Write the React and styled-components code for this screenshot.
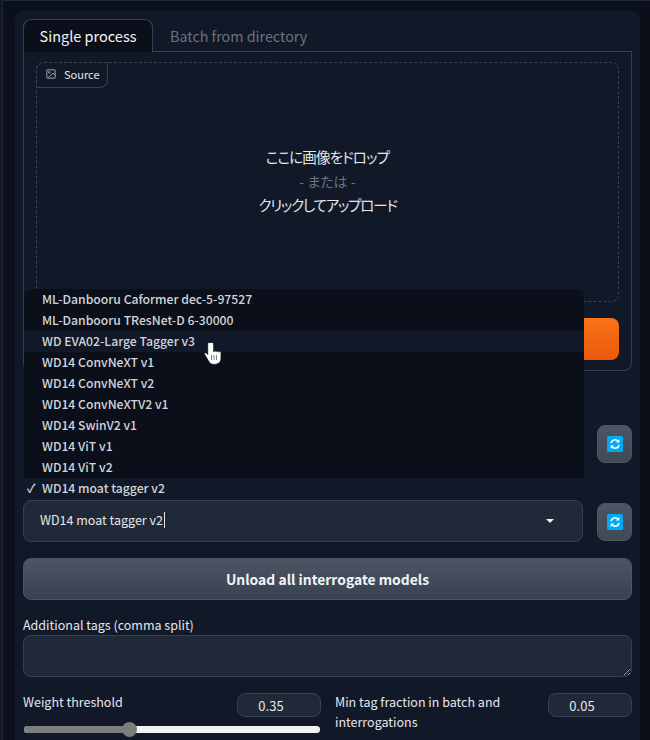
import React from "react";
import styled, { createGlobalStyle } from "styled-components";

const models = [
  "ML-Danbooru Caformer dec-5-97527",
  "ML-Danbooru TResNet-D 6-30000",
  "WD EVA02-Large Tagger v3",
  "WD14 ConvNeXT v1",
  "WD14 ConvNeXT v2",
  "WD14 ConvNeXTV2 v1",
  "WD14 SwinV2 v1",
  "WD14 ViT v1",
  "WD14 ViT v2",
  "WD14 moat tagger v2",
];

function RefreshIcon() {
  return (
    <svg width="16" height="16" viewBox="0 0 16 16">
      <rect width="16" height="16" rx="1.5" fill="#03a9f4" />
      <path d="M4 7.2A4 4 0 0 1 11 5.2M12 8.8A4 4 0 0 1 5 10.8" fill="none" stroke="#fff" strokeWidth="1.6" />
      <path d="M8.8 6.6h3.6V3zM7.2 9.4H3.6V13z" fill="#fff" />
    </svg>
  );
}

function ImageIcon() {
  return (
    <svg width="10" height="10" viewBox="0 0 24 24" fill="none" stroke="#9ca3af" strokeWidth="2.4">
      <rect x="2" y="2" width="20" height="20" rx="1" />
      <circle cx="8" cy="8" r="2" />
      <path d="M22 15l-5-5L4 22" />
    </svg>
  );
}

function HandCursor() {
  return (
    <svg width="18" height="24" viewBox="0 0 18 24">
      <path
        d="M5 1.500c-.9 0-1.300.7-1.300 1.500v10.500L2.500 12.300C1.200 11 -.4 12 .7 13.600l3.300 5.600C5.500 22 7.300 23.500 10 23.500c4.500 0 7-2.500 7-6.500v-5.500c0-1.500-2-1.600-2.300-.3-.2-1.700-2.300-1.700-2.500-.3-.2-1.700-2.400-1.600-2.500-.1V3c0-.8-.5-1.500-1.400-1.500z"
        fill="#fff"
        stroke="#0b0f19"
        strokeWidth="0.8"
      />
      <path d="M7.500 14v5M10 14v5M12.500 14v5" stroke="#6b7280" strokeWidth="0.9" />
    </svg>
  );
}

export default function App() {
  return (
    <>
      <GlobalStyle />
      <Page>
        <Panel>
          <Tabs>
            <ActiveTab>Single process</ActiveTab>
            <Tab>Batch from directory</Tab>
          </Tabs>
          <TabBody>
            <DropZone>
              <SourceBadge>
                <ImageIcon />
                Source
              </SourceBadge>
              <DropLine $spacing={-0.85}>ここに画像をドロップ</DropLine>
              <DropOr>- または -</DropOr>
              <DropLine $spacing={-1.2}>クリックしてアップロード</DropLine>
            </DropZone>
            <OrangeButton />
          </TabBody>

          <DropdownRow $top={54}>
            <Spacer />
            <IconButton>
              <RefreshIcon />
            </IconButton>
          </DropdownRow>

          <DropdownRow $top={40}>
            <SelectBox>
              <SelectValue>
                WD14 moat tagger v2<Caret />
              </SelectValue>
              <Arrow />
            </SelectBox>
            <IconButton>
              <RefreshIcon />
            </IconButton>
          </DropdownRow>

          <UnloadButton>Unload all interrogate models</UnloadButton>

          <Label>Additional tags (comma split)</Label>
          <TagsArea />

          <SliderGrid>
            <SliderBlock>
              <SliderHead>
                <SliderLabel>Weight threshold</SliderLabel>
                <NumberBox>0.35</NumberBox>
              </SliderHead>
              <Track>
                <TrackFill style={{ width: "35.5%" }} />
                <Thumb style={{ left: "35.5%" }} />
              </Track>
            </SliderBlock>
            <SliderBlock>
              <SliderHead>
                <SliderLabel>Min tag fraction in batch and interrogations</SliderLabel>
                <NumberBox>0.05</NumberBox>
              </SliderHead>
            </SliderBlock>
          </SliderGrid>

          <Menu>
            {models.map((name) => (
              <MenuItem key={name} $hover={name === "WD EVA02-Large Tagger v3"} $selected={name === "WD14 moat tagger v2"}>
                {name === "WD14 moat tagger v2" && <Check>✓</Check>}
                {name}
              </MenuItem>
            ))}
          </Menu>
          <CursorSpot>
            <HandCursor />
          </CursorSpot>
        </Panel>
      </Page>
    </>
  );
}

const GlobalStyle = createGlobalStyle`
  html, body {
    margin: 0;
    height: 740px;
    overflow: hidden;
    background: #111827;
  }
  * {
    box-sizing: border-box;
  }
`;

const Page = styled.div`
  height: 740px;
  margin-left: 2px;
  padding: 10px 0 0 12px;
  background: #0b0f19;
  border-left: 1px solid #1f2937;
  border-top: 1px solid #1f2937;
  font-family: "Noto Sans CJK JP", "Noto Sans", sans-serif;
  color: #e5e7eb;
`;

const Panel = styled.div`
  position: relative;
  width: 625px;
  height: 740px;
  padding: 8px 8px 0 8px;
  background: #111827;
  border-radius: 8px 8px 0 0;
`;

const Tabs = styled.div`
  display: flex;
  height: 33px;
  border-bottom: 1px solid #374151;
`;

const ActiveTab = styled.div`
  width: 130px;
  height: 33px;
  padding-top: 6px;
  text-align: center;
  font-size: 14.5px;
  line-height: 20px;
  color: #f3f4f6;
  background: #0b0f19;
  border: 1px solid #374151;
  border-bottom: none;
  border-radius: 8px 8px 0 0;
`;

const Tab = styled.div`
  padding: 7px 16px 0 17px;
  font-size: 14.3px;
  line-height: 20px;
  color: #6b7280;
`;

const TabBody = styled.div`
  height: 319px;
  padding: 10px 12px 0 12px;
  background: #111827;
  border: 1px solid #374151;
  border-top: none;
  border-radius: 0 0 8px 8px;
`;

const DropZone = styled.div`
  position: relative;
  height: 240px;
  padding-bottom: 2px;
  display: flex;
  flex-direction: column;
  align-items: center;
  justify-content: center;
  border: 1px dashed #374151;
  border-radius: 8px;
`;

const SourceBadge = styled.div`
  position: absolute;
  top: -1px;
  left: -1px;
  display: flex;
  align-items: center;
  gap: 8px;
  height: 26px;
  width: 72px;
  padding: 0 0 2px 9px;
  font-size: 11px;
  color: #e5e7eb;
  border: 1px solid #374151;
  border-radius: 8px 0 8px 0;
  border-top-style: dashed;
  border-left-style: dashed;
`;

const DropLine = styled.div`
  font-size: 14.5px;
  line-height: 24px;
  letter-spacing: ${(p) => p.$spacing || 0}px;
  color: #e5e7eb;
  font-feature-settings: "palt";
`;

const DropOr = styled(DropLine)`
  font-size: 14px;
  color: #6b7280;
`;

const OrangeButton = styled.div`
  height: 42px;
  margin-top: 16px;
  background: linear-gradient(to bottom, #f97316, #ea580c);
  border-radius: 8px;
`;

const DropdownRow = styled.div`
  display: flex;
  justify-content: space-between;
  margin-top: ${(p) => p.$top}px;
`;

const Spacer = styled.div`
  height: 38px;
`;

const IconButton = styled.div`
  width: 35px;
  height: 38px;
  display: flex;
  align-items: center;
  justify-content: center;
  background: linear-gradient(to bottom, #4b5563, #404956);
  border: 1px solid #4b5563;
  border-radius: 8px;
`;

const SelectBox = styled.div`
  width: 560px;
  height: 42px;
  margin-top: -3px;
  padding: 0 28px 0 16px;
  display: flex;
  align-items: center;
  justify-content: space-between;
  font-size: 12.5px;
  color: #e5e7eb;
  background: #1f2937;
  border: 1px solid #374151;
  border-radius: 8px;
`;

const SelectValue = styled.span`
  padding-bottom: 3px;
`;

const Caret = styled.span`
  display: inline-block;
  width: 1px;
  height: 16px;
  margin-left: 1px;
  vertical-align: -3px;
  background: #e5e7eb;
`;

const Arrow = styled.span`
  width: 0;
  height: 0;
  border-left: 4px solid transparent;
  border-right: 4px solid transparent;
  border-top: 4px solid #f3f4f6;
`;

const UnloadButton = styled.div`
  height: 42px;
  margin-top: 16px;
  display: flex;
  align-items: center;
  justify-content: center;
  font-size: 13.9px;
  font-weight: 700;
  color: #f3f4f6;
  background: linear-gradient(to bottom, #4b5563, #374151);
  border: 1px solid #4b5563;
  border-radius: 8px;
`;

const Label = styled.div`
  margin-top: 15px;
  font-size: 12.5px;
  line-height: 20px;
  color: #e5e7eb;
`;

const TagsArea = styled.textarea`
  display: block;
  width: 100%;
  height: 42px;
  margin: 0;
  resize: vertical;
  background: #1f2937;
  border: 1px solid #374151;
  border-radius: 8px;
`;

const SliderGrid = styled.div`
  display: grid;
  grid-template-columns: 298px 297px;
  column-gap: 14px;
  margin-top: 16px;
`;

const SliderBlock = styled.div`
  min-width: 0;
`;

const SliderHead = styled.div`
  display: flex;
  justify-content: space-between;
  align-items: flex-start;
`;

const SliderLabel = styled.div`
  width: 190px;
  margin-top: -1px;
  font-size: 12.5px;
  line-height: 20px;
  color: #e5e7eb;
`;

const NumberBox = styled.div`
  width: 84px;
  height: 24px;
  padding-right: 16px;
  font-size: 13px;
  line-height: 24px;
  text-align: center;
  color: #e5e7eb;
  background: #1f2937;
  border: 1px solid #374151;
  border-radius: 8px;
`;

const Track = styled.div`
  position: relative;
  height: 7px;
  margin: 9px 1px 0;
  background: #f3f3f3;
  border-radius: 4px;
`;

const TrackFill = styled.div`
  height: 7px;
  background: #7d7d7d;
  border-radius: 4px 0 0 4px;
`;

const Thumb = styled.div`
  position: absolute;
  top: -4px;
  width: 15px;
  height: 15px;
  margin-left: -7px;
  background: #7d7d7d;
  border-radius: 50%;
`;

const Menu = styled.div`
  position: absolute;
  top: 278px;
  left: 9px;
  width: 560px;
  background: #0b0f19;
  border-radius: 8px 8px 0 0;
`;

const MenuItem = styled.div`
  position: relative;
  height: 21px;
  padding-left: 18px;
  font-size: 12.2px;
  font-weight: 500;
  line-height: 20px;
  color: #d1d5db;
  background: ${(p) => (p.$hover || p.$selected ? "#111827" : "transparent")};
`;

const Check = styled.span`
  position: absolute;
  left: 3px;
  top: 0;
`;

const CursorSpot = styled.div`
  position: absolute;
  top: 330px;
  left: 189px;
  width: 18px;
  height: 24px;
`;
